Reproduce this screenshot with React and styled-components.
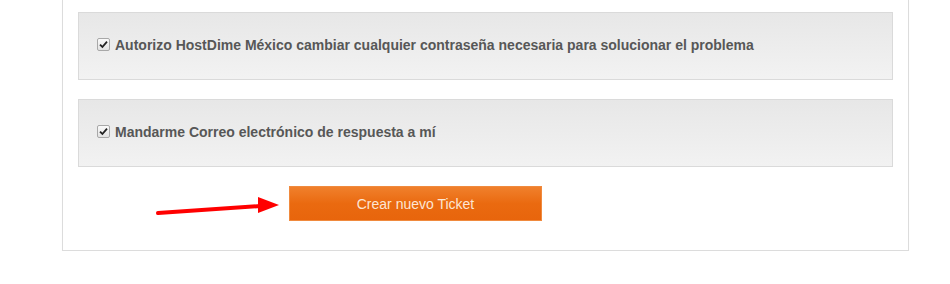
import React from 'react';
import styled, { createGlobalStyle } from 'styled-components';

const Global = createGlobalStyle`
  html, body {
    margin: 0;
    padding: 0;
    background: #fff;
  }
  body {
    font-family: "Liberation Sans", Arial, sans-serif;
  }
`;

const Panel = styled.div`
  box-sizing: border-box;
  margin-left: 62px;
  width: 847px;
  border: 1px solid #dcdcdc;
  border-top: none;
  padding: 12px 15px 29px 15px;
  box-shadow: 0 1px 1px rgba(0, 0, 0, 0.03);
`;

const OptionBox = styled.div`
  box-sizing: border-box;
  height: 68px;
  margin-bottom: 19px;
  border: 1px solid #dadada;
  background: linear-gradient(to bottom, #e7e7e7 0%, #f2f2f2 100%);
  display: flex;
  align-items: center;
  padding: 0 0 3px 18px;
`;

const CheckBox = styled.span`
  box-sizing: border-box;
  width: 13px;
  height: 13px;
  margin: 0 5px 0 0;
  flex: none;
  border: 1px solid #a8a8a8;
  border-radius: 2px;
  background: linear-gradient(to bottom, #fafafa, #e2e2e2);
  display: flex;
  align-items: center;
  justify-content: center;
`;

const Label = styled.label`
  font-size: 14px;
  font-weight: bold;
  color: #575757;
  line-height: 20px;
`;

const SubmitRow = styled.div`
  display: flex;
  align-items: center;
  padding-left: 77px;
`;

const Arrow = styled.svg`
  width: 130px;
  height: 24px;
  flex: none;
  margin-right: 4px;
  margin-top: 3px;
`;

const Button = styled.button`
  box-sizing: border-box;
  width: 253px;
  height: 35px;
  border: 1px solid #f08a3e;
  background: linear-gradient(to bottom, #f0802c 0%, #ea6a10 50%, #e8650c 100%);
  color: #fde6d4;
  font-family: "Liberation Sans", Arial, sans-serif;
  font-size: 14px;
  padding: 0;
  cursor: pointer;
`;

function Option({ children }) {
  return (
    <OptionBox>
      <CheckBox role="checkbox" aria-checked="true">
        <svg width="9" height="9" viewBox="0 0 9 9">
          <path d="M1 4.6 L3.4 7 L8 1.6" fill="none" stroke="#222" strokeWidth="1.8" />
        </svg>
      </CheckBox>
      <Label>{children}</Label>
    </OptionBox>
  );
}

export default function App() {
  return (
    <>
      <Global />
      <Panel>
        <Option>Autorizo HostDime México cambiar cualquier contraseña necesaria para solucionar el problema</Option>
        <Option>Mandarme Correo electrónico de respuesta a mí</Option>
        <SubmitRow>
          <Arrow viewBox="0 0 130 24">
            <line x1="3" y1="20" x2="106" y2="13" stroke="#ff0000" strokeWidth="4" strokeLinecap="round" />
            <polygon points="103,4 124,12 103,20" fill="#ff0000" />
          </Arrow>
          <Button>Crear nuevo Ticket</Button>
        </SubmitRow>
      </Panel>
    </>
  );
}
